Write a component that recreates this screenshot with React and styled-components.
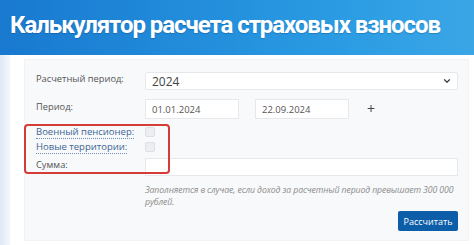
import React from "react";
import styled, { createGlobalStyle } from "styled-components";
import { ChevronDown } from "lucide-react";

const GlobalStyle = createGlobalStyle`
  html, body {
    margin: 0;
    padding: 0;
    width: 474px;
    height: 245px;
    overflow: hidden;
    background: linear-gradient(to right, #dfeaf6 0px, #f3f7fb 10px, #ffffff 10px);
    font-family: "Open Sans", "Liberation Sans", sans-serif;
  }
`;

const Header = styled.header`
  height: 55px;
  background: linear-gradient(to right, #1879cf, #2a9be3 70%, #3aa6e6);
  display: flex;
  align-items: center;
  padding-left: 10px;
  box-sizing: border-box;
`;

const Title = styled.h1`
  margin: 0;
  font-family: Roboto, "Liberation Sans", sans-serif;
  font-weight: 700;
  font-size: 24px;
  letter-spacing: -1.05px;
  color: #ffffff;
  white-space: nowrap;
  margin-top: -6px;
  text-shadow: 0 1px 1px rgba(0, 40, 90, 0.25);
`;

const Main = styled.main`
  margin-left: 10px;
  background: #ffffff;
  padding: 5px 6px 0 15px;
  height: 190px;
  box-sizing: border-box;
`;

const Panel = styled.form`
  position: relative;
  background: #f8f9fa;
  box-shadow: 0 0 0 1px #f1f3f5;
  padding: 12px 10px 9px 11px;
`;

const Row = styled.div`
  display: grid;
  grid-template-columns: 109px 1fr;
  align-items: start;
  height: ${(p) => p.$h}px;
  margin-top: ${(p) => p.$gap || 0}px;
`;

const Label = styled.span`
  font-size: 9.3px;
  line-height: 14px;
  color: #555;
  padding-top: ${(p) => p.$pt || 0}px;
  white-space: nowrap;
`;

const LinkLabel = styled.span`
  justify-self: start;
  font-size: 9.5px;
  line-height: 12px;
  color: #3a6596;
  border-bottom: 1px dotted #6f8fb5;
  margin-top: ${(p) => p.$pt || 0}px;
  white-space: nowrap;
`;

const Select = styled.div`
  height: 18px;
  background: #fff;
  border: 1px solid #e6e8eb;
  border-radius: 2px;
  box-sizing: border-box;
  display: flex;
  align-items: center;
  justify-content: space-between;
  padding: 0 5px 0 6px;
  font-size: 12px;
  color: #444;
`;

const Inputs = styled.div`
  display: flex;
  align-items: center;
  gap: 16px;
`;

const Input = styled.div`
  width: ${(p) => (p.$w ? `${p.$w}px` : "auto")};
  height: ${(p) => p.$h || 20}px;
  background: #fff;
  border: 1px solid #e6e8eb;
  box-sizing: border-box;
  display: flex;
  align-items: center;
  padding-left: 6px;
  font-size: 9.5px;
  color: #555;
`;

const Plus = styled.span`
  font-size: 14px;
  color: #444;
  margin-left: 2px;
  line-height: 1;
`;

const Checkbox = styled.span`
  width: 10px;
  height: 10px;
  margin-top: ${(p) => p.$mt || 0}px;
  background: #eceef1;
  border: 1px solid #dcdfe3;
  border-radius: 2px;
  box-sizing: border-box;
`;

const Hint = styled.p`
  margin: 8px 0 0 109px;
  font-size: 8.7px;
  letter-spacing: -0.1px;
  line-height: 12px;
  font-style: italic;
  color: #8c8c8c;
`;

const Actions = styled.div`
  display: flex;
  justify-content: flex-end;
  margin-top: 3px;
`;

const Button = styled.button`
  width: 60px;
  height: 20px;
  padding: 0;
  border: none;
  border-radius: 2px;
  background: #0c5ea9;
  color: #fff;
  font-family: "Open Sans", "Liberation Sans", sans-serif;
  font-size: 9px;
  cursor: pointer;
`;

const Highlight = styled.div`
  position: absolute;
  left: -1px;
  top: 64px;
  width: 146px;
  height: 50px;
  border: 2px solid #d53b37;
  border-radius: 4px;
  box-sizing: border-box;
  pointer-events: none;
`;

export default function App() {
  return (
    <>
      <GlobalStyle />
      <Header>
        <Title>Калькулятор расчета страховых взносов</Title>
      </Header>
      <Main>
        <Panel onSubmit={(e) => e.preventDefault()}>
          <Row $h={18}>
            <Label $pt={0}>Расчетный период:</Label>
            <Select>
              2024
              <ChevronDown size={10} strokeWidth={3} color="#444" />
            </Select>
          </Row>
          <Row $h={20} $gap={9}>
            <Label $pt={1}>Период:</Label>
            <Inputs>
              <Input $w={94}>01.01.2024</Input>
              <Input $w={94}>22.09.2024</Input>
              <Plus>+</Plus>
            </Inputs>
          </Row>
          <Row $h={14} $gap={6}>
            <LinkLabel $pt={1}>Военный пенсионер:</LinkLabel>
            <Checkbox $mt={2} />
          </Row>
          <Row $h={14} $gap={1}>
            <LinkLabel $pt={1}>Новые территории:</LinkLabel>
            <Checkbox $mt={2} />
          </Row>
          <Row $h={18} $gap={4}>
            <Label $pt={-2}>Сумма:</Label>
            <Input $h={18} />
          </Row>
          <Hint>
            Заполняется в случае, если доход за расчетный период превышает 300&nbsp;000 рублей.
          </Hint>
          <Actions>
            <Button type="submit">Рассчитать</Button>
          </Actions>
          <Highlight />
        </Panel>
      </Main>
    </>
  );
}
